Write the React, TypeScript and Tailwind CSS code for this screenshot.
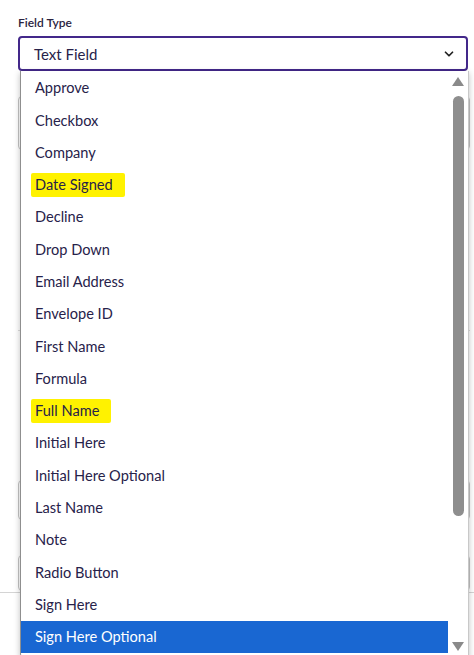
import { ChevronDown } from "lucide-react";

const options = [
  "Approve",
  "Checkbox",
  "Company",
  "Date Signed",
  "Decline",
  "Drop Down",
  "Email Address",
  "Envelope ID",
  "First Name",
  "Formula",
  "Full Name",
  "Initial Here",
  "Initial Here Optional",
  "Last Name",
  "Note",
  "Radio Button",
  "Sign Here",
  "Sign Here Optional",
];

const marked = ["Date Signed", "Full Name"];

export default function App() {
  return (
    <div
      className="relative w-[474px] h-[655px] overflow-hidden bg-white text-[#27224a]"
      style={{ fontFamily: "Lato, 'Open Sans', sans-serif" }}
    >
      {/* faint form fields behind the open menu */}
      <div className="absolute left-[18px] top-[96px] w-[452px] h-[54px] border border-[#c4c4c4] rounded" />
      <div className="absolute left-[18px] top-[330px] w-[452px] h-[18px] border-t border-[#dddddd]" />
      <div className="absolute left-[18px] top-[480px] w-[452px] h-[40px] border border-[#c4c4c4] rounded" />
      <div className="absolute left-[18px] top-[555px] w-[452px] h-[36px] border border-[#c4c4c4] rounded" />
      <div className="absolute left-0 top-[592px] w-[474px] border-t border-[#d4d4d4]" />

      <div className="relative px-[18px] pt-[15px]">
        <div className="text-[12px] font-semibold leading-[16px] text-[#2a2340]">Field Type</div>
        <div className="mt-[5px] h-[35px] w-[450px] border-2 border-[#43288a] rounded-[4px] flex items-center justify-between pl-[14px] pr-[10px] bg-white">
          <span className="text-[15px] pt-[1px]">Text Field</span>
          <ChevronDown className="w-[14px] h-[14px] text-[#222]" strokeWidth={3} />
        </div>

        <div className="ml-[2px] w-[449px] h-[590px] bg-white border border-l-[#8f8f8f] border-r-[#c8c8c8] border-t-0 border-b-0 rounded-bl-[8px] rounded-br-[4px] shadow-[0_2px_6px_rgba(0,0,0,0.25)] flex overflow-hidden">
          <ul className="flex-1 pt-[1px]">
            {options.map((o) => {
              const selected = o === "Sign Here Optional";
              return (
                <li
                  key={o}
                  className={`h-[32.3px] flex items-center pl-[14px] text-[14.6px] ${
                    selected ? "bg-[#1967d2] text-white" : ""
                  }`}
                >
                  {marked.includes(o) ? (
                    <span className="bg-[#fff200] px-[4px] -ml-[4px] py-[1px] pr-[12px] rounded-[2px]">{o}</span>
                  ) : (
                    o
                  )}
                </li>
              );
            })}
          </ul>
          <div className="w-[20px] flex flex-col items-center pt-[6px]">
            <svg width="12" height="9" viewBox="0 0 12 9">
              <path d="M6 0 L12 9 L0 9 Z" fill="#8a8a8a" />
            </svg>
            <div className="mt-[10px] w-[11px] h-[420px] rounded-full bg-[#8e8e8e]" />
            <div className="flex-1" />
            <svg width="12" height="9" viewBox="0 0 12 9" className="mb-[10px]">
              <path d="M0 0 L12 0 L6 9 Z" fill="#8a8a8a" />
            </svg>
          </div>
        </div>
      </div>
    </div>
  );
}
